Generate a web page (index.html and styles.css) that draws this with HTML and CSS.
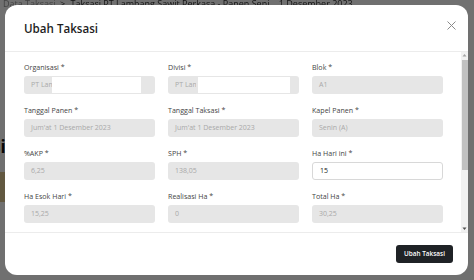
FILE: index.html
```html
<!DOCTYPE html>
<html lang="id">
<head>
<meta charset="utf-8">
<title>Ubah Taksasi</title>
<link rel="stylesheet" href="styles.css">
</head>
<body>
<div class="page">
  <div class="page-title"><span class="crumb">Data Taksasi</span> <span class="sep">&gt;</span> Taksasi PT Lambang Sawit Perkasa - Panen Seni... 1 Desember 2023</div>
  <div class="page-side">si</div>
  <div class="page-mark"></div>
</div>
<div class="backdrop">
  <div class="modal">
    <div class="modal-header">
      <h2 class="modal-title">Ubah Taksasi</h2>
      <svg class="close" width="9" height="9" viewBox="0 0 9 9"><path d="M0.5 0.5L8.5 8.5M8.5 0.5L0.5 8.5" stroke="#8a8a8a" stroke-width="1"/></svg>
    </div>
    <div class="modal-main">
      <div class="modal-body">
        <div class="grid">
          <div class="field"><div class="label">Organisasi *</div><div class="input disabled"><span class="lead">PT Lam</span><span class="redact r1"></span></div></div>
          <div class="field"><div class="label">Divisi *</div><div class="input disabled"><span class="lead">PT Lam</span><span class="redact r2"></span></div></div>
          <div class="field"><div class="label">Blok *</div><div class="input disabled">A1</div></div>

          <div class="field"><div class="label">Tanggal Panen *</div><div class="input disabled">Jum'at 1 Desember 2023</div></div>
          <div class="field"><div class="label">Tanggal Taksasi *</div><div class="input disabled">Jum'at 1 Desember 2023</div></div>
          <div class="field"><div class="label">Kapel Panen *</div><div class="input disabled">Senin (A)</div></div>

          <div class="field"><div class="label">%AKP *</div><div class="input disabled">6,25</div></div>
          <div class="field"><div class="label">SPH *</div><div class="input disabled">138,05</div></div>
          <div class="field"><div class="label">Ha Hari ini *</div><div class="input active">15</div></div>

          <div class="field"><div class="label">Ha Esok Hari *</div><div class="input disabled">15,25</div></div>
          <div class="field"><div class="label">Realisasi Ha *</div><div class="input disabled">0</div></div>
          <div class="field"><div class="label">Total Ha *</div><div class="input disabled">30,25</div></div>

          <div class="field"><div class="label">Jumlah Pemanen *</div><div class="input disabled">10</div></div>
          <div class="field"><div class="label">Taksasi Janjang *</div><div class="input disabled">2.105</div></div>
          <div class="field"><div class="label">Taksasi Ton *</div><div class="input disabled">42,10</div></div>
        </div>
      </div>
      <div class="scrollbar" aria-hidden="true">
        <svg class="arrow" width="7" height="7" viewBox="0 0 7 7"><path d="M3.5 2L5.5 4.5H1.5z" fill="#a3a3a3"/></svg>
        <div class="track"><div class="thumb"></div></div>
        <svg class="arrow" width="7" height="7" viewBox="0 0 7 7"><path d="M1.5 2.5H5.5L3.5 5z" fill="#505050"/></svg>
      </div>
    </div>
    <div class="modal-footer">
      <button class="btn">Ubah Taksasi</button>
    </div>
  </div>
</div>
</body>
</html>
```

FILE: styles.css
```css
* { box-sizing: border-box; }
html, body { margin: 0; padding: 0; }
body {
  width: 474px;
  height: 280px;
  overflow: hidden;
  font-family: "Open Sans", "Noto Sans", sans-serif;
  background: #fff;
  position: relative;
}
.page-title {
  font-size: 9px;
  color: #333;
  padding: 0 0 0 3px;
  line-height: 10px;
  margin-top: -1px;
  white-space: nowrap;
  filter: blur(0.4px);
}
.page-title .crumb { color: #999; margin-right: 2px; }
.page-title .sep { margin-right: 3px; }
.page-side {
  margin-top: 126px;
  margin-left: -8px;
  font-size: 17px;
  font-weight: 700;
  color: #111;
}
.page-mark {
  margin-top: 14px;
  width: 8px;
  height: 30px;
  background: #c9a44a;
  opacity: .6;
}
.backdrop {
  position: absolute;
  inset: 0;
  background: rgba(0, 0, 0, 0.56);
  padding: 5px 6px 5px 5px;
  display: flex;
}
.modal {
  flex: 1;
  background: #fff;
  border-radius: 12px;
  display: flex;
  flex-direction: column;
  overflow: hidden;
}
.modal-header {
  height: 47px;
  flex: none;
  display: flex;
  align-items: center;
  justify-content: space-between;
  padding: 1px 12px 0 19px;
  border-bottom: 1px solid #ececec;
}
.modal-title {
  margin: 0;
  font-size: 11.6px;
  font-weight: 600;
  color: #1e1e1e;
}
.close { margin-top: -6px; }
.modal-main {
  flex: 1;
  display: flex;
  min-height: 0;
}
.modal-body {
  flex: 1;
  overflow: hidden;
  padding: 10px 18px 14px 19px;
}
.scrollbar {
  width: 7px;
  flex: none;
  background: #f1f1f1;
  display: flex;
  flex-direction: column;
}
.arrow { display: block; flex: none; }
.track {
  flex: 1;
  padding-top: 1px;
}
.thumb {
  height: 110px;
  background: #c1c1c1;
  margin: 0 0.5px;
}
.grid {
  display: grid;
  grid-template-columns: repeat(3, 1fr);
  column-gap: 13px;
  row-gap: 11.5px;
}
.label {
  font-size: 7.1px;
  line-height: 11px;
  color: #444;
  margin-bottom: 2.5px;
}
.input {
  height: 18px;
  border-radius: 3px;
  font-size: 7px;
  padding: 0 7px;
  display: flex;
  align-items: center;
  white-space: nowrap;
  overflow: hidden;
}
.input.disabled {
  background: #e6e6e6;
  color: #a9a9a9;
}
.input.active {
  background: #fff;
  border: 1px solid #d8d8d8;
  color: #222;
}
.lead {
  display: block;
  flex: none;
  width: 21px;
  overflow: hidden;
}
.redact {
  display: block;
  height: 16px;
  background: #fff;
  flex: none;
}
.r1 { width: 89px; }
.r2 { width: 92px; margin-left: 2px; }
.modal-footer {
  height: 43px;
  flex: none;
  border-top: 1px solid #ececec;
  display: flex;
  align-items: center;
  justify-content: flex-end;
  padding: 0 15px 1px 0;
}
.btn {
  height: 18px;
  width: 57px;
  padding: 0;
  border: none;
  border-radius: 3px;
  background: #1f2226;
  color: #fff;
  font-family: "Open Sans", "Noto Sans", sans-serif;
  font-size: 6.4px;
  font-weight: 600;
}
```
